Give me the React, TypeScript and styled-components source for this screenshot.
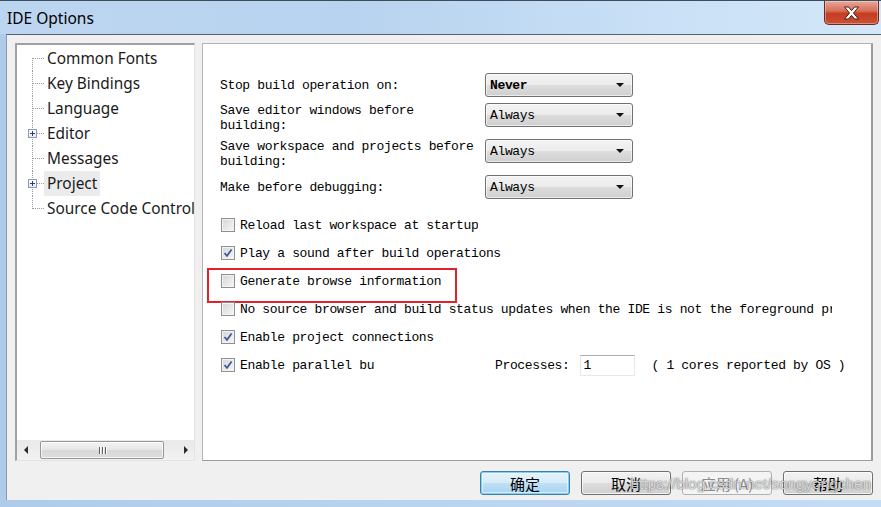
import React from "react";
import styled, { createGlobalStyle, css } from "styled-components";

const GlobalStyle = createGlobalStyle`
  html, body { margin: 0; padding: 0; }
  body { width: 881px; height: 507px; overflow: hidden; background: #b9d3ee; }
  * { box-sizing: border-box; }
`;

const mono = `"Liberation Mono", "Courier New", monospace`;
const ui = `"Noto Sans", "Open Sans", sans-serif`;
const cjk = `"Noto Sans CJK SC", "Noto Sans", sans-serif`;

const Window = styled.div`
  width: 881px;
  height: 507px;
  display: flex;
  flex-direction: column;
  background: linear-gradient(to right, #aecbea, #b9d4f0 50%, #c4dcf4);
`;

const TitleBar = styled.div`
  height: 34px;
  flex: none;
  display: flex;
  align-items: flex-start;
  border-top: 1px solid #3f4c5a;
  background: linear-gradient(to right, #bcd6f1 0%, #b8d3ef 40%, #c9e0f6 75%, #d3e7f8 100%);
`;

const Title = styled.div`
  font-family: ${ui};
  font-size: 15.5px;
  line-height: 20px;
  color: #000;
  padding: 7px 0 0 7px;
`;

const CloseButton = styled.div`
  margin-left: auto;
  margin-right: 2px;
  width: 55px;
  height: 24px;
  border: 1px solid #6b2a20;
  border-top: none;
  border-radius: 0 0 5px 5px;
  background: linear-gradient(#e8a899 0%, #d8705c 42%, #c33d22 55%, #cc5035 100%);
  box-shadow: inset 0 0 0 1px rgba(255, 255, 255, 0.35);
  display: flex;
  align-items: center;
  justify-content: center;
`;

const Client = styled.div`
  flex: 1;
  margin: 0 0 7px 6px;
  background: #f0f0f0;
  border-left: 1px solid #8c9aab;
  border-top: 1px solid #55626f;
  padding: 8px 8px 0 8px;
  display: flex;
  flex-direction: column;
`;

const Main = styled.div`
  height: 418px;
  display: flex;
  gap: 7px;
`;

const Tree = styled.div`
  width: 180px;
  display: flex;
  flex-direction: column;
  background: #fff;
  border-style: solid;
  border-width: 2px 1px 1px 2px;
  border-color: #a0a0a0 #e3e3e3 #e3e3e3 #a0a0a0;
`;

const TreeList = styled.div`
  flex: 1;
  padding-top: 1px;
  overflow: hidden;
`;

const TreeRow = styled.div<{ $first?: boolean; $last?: boolean }>`
  position: relative;
  height: 25px;
  padding-left: 27px;
  display: flex;
  align-items: center;
  white-space: nowrap;

  &::before {
    content: "";
    position: absolute;
    left: 15px;
    top: ${(p) => (p.$first ? "12px" : "0")};
    bottom: ${(p) => (p.$last ? "12px" : "0")};
    border-left: 1px dotted #9a9a9a;
  }
  &::after {
    content: "";
    position: absolute;
    left: 16px;
    top: 12px;
    width: 11px;
    border-top: 1px dotted #9a9a9a;
  }
`;

const Expander = styled.span`
  position: absolute;
  left: 11px;
  top: 8px;
  width: 9px;
  height: 9px;
  border: 1px solid #8e9aa8;
  background: linear-gradient(#ffffff, #e6e9ee);
  z-index: 1;

  &::before {
    content: "";
    position: absolute;
    left: 1px;
    top: 3px;
    width: 5px;
    height: 1px;
    background: #1f3f8a;
  }
  &::after {
    content: "";
    position: absolute;
    left: 3px;
    top: 1px;
    width: 1px;
    height: 5px;
    background: #1f3f8a;
  }
`;

const TreeLabel = styled.span<{ $selected?: boolean }>`
  font-family: ${ui};
  font-size: 15.4px;
  color: #1a1a1a;
  height: 25px;
  line-height: 25px;
  padding: 0 3px;
  background: ${(p) => (p.$selected ? "#ebebeb" : "transparent")};
`;

const HScroll = styled.div`
  height: 20px;
  flex: none;
  display: flex;
  align-items: center;
  background: linear-gradient(#e9e9e9, #f2f2f2);
`;

const ScrollArrow = styled.div<{ $dir: "left" | "right" }>`
  width: 17px;
  height: 20px;
  display: flex;
  align-items: center;
  justify-content: center;
  &::before {
    content: "";
    width: 0;
    height: 0;
    border-top: 4px solid transparent;
    border-bottom: 4px solid transparent;
    ${(p) =>
      p.$dir === "left"
        ? css`border-right: 4px solid #2b2b2b;`
        : css`border-left: 4px solid #2b2b2b;`}
  }
`;

const ScrollTrack = styled.div`
  flex: 1;
  padding-left: 6px;
  display: flex;
  align-items: center;
`;

const ScrollThumb = styled.div`
  width: 124px;
  height: 18px;
  border: 1px solid #979797;
  border-radius: 2px;
  background: linear-gradient(#f4f4f4, #e6e6e6 50%, #d8d8d8 51%, #dcdcdc);
  box-shadow: inset 0 0 0 1px rgba(255, 255, 255, 0.7);
  display: flex;
  align-items: center;
  justify-content: center;
  gap: 2px;
`;

const Grip = styled.span`
  width: 1px;
  height: 7px;
  background: #5e5e5e;
  box-shadow: 1px 0 0 #fff;
`;

const Panel = styled.div`
  flex: 1;
  background: #fff;
  border-style: solid;
  border-width: 1px 2px 1px 1px;
  border-color: #b4b4b4 #9c9ca2 #9c9ca2 #b4b4b4;
  padding: 29px 0 0 17px;
  font-family: ${mono};
  font-size: 13px;
  letter-spacing: -0.35px;
  color: #000;
`;

const Settings = styled.div`
  display: flex;
  flex-direction: column;
  gap: 6px;
`;

const SettingRow = styled.div<{ $tall?: boolean }>`
  display: flex;
  align-items: ${(p) => (p.$tall ? "flex-start" : "center")};
`;

const SettingLabel = styled.div`
  width: 265px;
  line-height: 15px;
  white-space: pre-line;
`;

const Combo = styled.div<{ $bold?: boolean }>`
  width: 148px;
  height: 24px;
  border: 1px solid #707070;
  border-radius: 3px;
  background: linear-gradient(#f3f3f3, #ebebeb 50%, #dddddd 51%, #cfcfcf);
  box-shadow: inset 0 0 0 1px rgba(255, 255, 255, 0.6);
  display: flex;
  align-items: center;
  padding: 0 8px 0 4px;
  font-weight: ${(p) => (p.$bold ? 700 : 400)};

  &::after {
    content: "";
    margin-left: auto;
    border-left: 4px solid transparent;
    border-right: 4px solid transparent;
    border-top: 4px solid #111;
  }
`;

const Checks = styled.div`
  margin-top: 12px;
  display: flex;
  flex-direction: column;
`;

const CheckRow = styled.div<{ $marked?: boolean }>`
  position: relative;
  height: 28px;
  display: flex;
  align-items: center;
  white-space: nowrap;
  ${(p) =>
    p.$marked &&
    css`
      &::after {
        content: "";
        position: absolute;
        left: -13px;
        top: 1px;
        width: 246px;
        height: 31px;
        border: 2px solid #e3212b;
      }
    `}
`;

const Box = styled.span`
  width: 14px;
  height: 14px;
  flex: none;
  margin: 0 5px 0 1px;
  border: 1px solid #8e8f8f;
  background: linear-gradient(135deg, #d2d5da, #f7f7f7);
  box-shadow: inset 0 0 0 1px #f4f4f4;
  display: flex;
  align-items: center;
  justify-content: center;
`;

const CheckText = styled.span<{ $width?: number }>`
  display: inline-block;
  overflow: hidden;
  ${(p) => (p.$width ? css`width: ${p.$width}px;` : "")}
`;

const ProcInput = styled.div`
  width: 55px;
  height: 21px;
  margin-left: 10px;
  border: 1px solid #e3e9ef;
  border-top-color: #abadb3;
  background: #fff;
  padding: 0 3px;
  line-height: 19px;
`;

const CoresText = styled.span`
  margin-left: 17px;
`;

const ButtonRow = styled.div`
  position: relative;
  margin-top: 10px;
  display: flex;
  justify-content: flex-end;
  gap: 11px;
`;

const Button = styled.div<{ $variant?: "default" | "disabled" }>`
  width: 90px;
  height: 24px;
  border-radius: 3px;
  display: flex;
  align-items: center;
  justify-content: center;
  font-family: ${cjk};
  font-size: 15px;
  color: #000;
  border: 1px solid #707070;
  background: linear-gradient(#f2f2f2, #ebebeb 50%, #dddddd 51%, #cfcfcf);
  box-shadow: inset 0 0 0 1px rgba(255, 255, 255, 0.7);
  ${(p) =>
    p.$variant === "default" &&
    css`
      border-color: #3c7fb1;
      background: linear-gradient(#e5f3fb, #d5ebf9 50%, #bfdff5 51%, #a9d3f1);
      box-shadow: inset 0 0 0 1px #7fd0f4, inset 0 0 0 2px rgba(255, 255, 255, 0.5);
    `}
  ${(p) =>
    p.$variant === "disabled" &&
    css`
      border-color: #adb2b5;
      background: #f4f4f4;
      color: #8d8d8d;
      box-shadow: none;
    `}
`;

const Watermark = styled.div`
  position: absolute;
  right: 2px;
  top: 4px;
  font-family: "Liberation Sans", Arial, sans-serif;
  font-size: 15.5px;
  color: rgba(255, 255, 255, 0.75);
  text-shadow: 0 0 1px rgba(60, 60, 60, 0.8), 0 0 2px rgba(60, 60, 60, 0.4);
  pointer-events: none;
  letter-spacing: -0.1px;
`;

const CheckMark = () => (
  <svg width="10" height="10" viewBox="0 0 10 10">
    <path d="M1.5 5 L4 7.8 L8.6 1.6" fill="none" stroke="#3d5596" strokeWidth="1.7" />
  </svg>
);

const CloseGlyph = () => (
  <svg width="17" height="14" viewBox="0 0 17 14">
    <path
      d="M1.5 1 H5.5 L8.5 4.6 L11.5 1 H15.5 L10.5 7 L15.5 13 H11.5 L8.5 9.4 L5.5 13 H1.5 L6.5 7 Z"
      fill="#fff"
      stroke="#4a1a12"
      strokeWidth="1"
      strokeLinejoin="round"
    />
  </svg>
);

type Node = { label: string; expandable?: boolean; selected?: boolean };
const nodes: Node[] = [
  { label: "Common Fonts" },
  { label: "Key Bindings" },
  { label: "Language" },
  { label: "Editor", expandable: true },
  { label: "Messages" },
  { label: "Project", expandable: true, selected: true },
  { label: "Source Code Control" },
];

const checks = [
  { text: "Reload last workspace at startup", checked: false },
  { text: "Play a sound after build operations", checked: true },
  { text: "Generate browse information", checked: false, marked: true },
  {
    text: "No source browser and build status updates when the IDE is not the foreground process",
    checked: false,
    width: 592,
  },
  { text: "Enable project connections", checked: true },
];

export default function App() {
  return (
    <>
      <GlobalStyle />
      <Window>
        <TitleBar>
          <Title>IDE Options</Title>
          <CloseButton>
            <CloseGlyph />
          </CloseButton>
        </TitleBar>
        <Client>
          <Main>
            <Tree>
              <TreeList>
                {nodes.map((n, i) => (
                  <TreeRow key={n.label} $first={i === 0} $last={i === nodes.length - 1}>
                    {n.expandable && <Expander />}
                    <TreeLabel $selected={n.selected}>{n.label}</TreeLabel>
                  </TreeRow>
                ))}
              </TreeList>
              <HScroll>
                <ScrollArrow $dir="left" />
                <ScrollTrack>
                  <ScrollThumb>
                    <Grip />
                    <Grip />
                    <Grip />
                  </ScrollThumb>
                </ScrollTrack>
                <ScrollArrow $dir="right" />
              </HScroll>
            </Tree>
            <Panel>
              <Settings>
                <SettingRow>
                  <SettingLabel>Stop build operation on:</SettingLabel>
                  <Combo $bold>Never</Combo>
                </SettingRow>
                <SettingRow $tall>
                  <SettingLabel>{"Save editor windows before\nbuilding:"}</SettingLabel>
                  <Combo>Always</Combo>
                </SettingRow>
                <SettingRow $tall>
                  <SettingLabel>{"Save workspace and projects before\nbuilding:"}</SettingLabel>
                  <Combo>Always</Combo>
                </SettingRow>
                <SettingRow>
                  <SettingLabel>Make before debugging:</SettingLabel>
                  <Combo>Always</Combo>
                </SettingRow>
              </Settings>
              <Checks>
                {checks.map((c) => (
                  <CheckRow key={c.text} $marked={c.marked}>
                    <Box>{c.checked && <CheckMark />}</Box>
                    <CheckText $width={c.width}>{c.text}</CheckText>
                  </CheckRow>
                ))}
                <CheckRow>
                  <Box>
                    <CheckMark />
                  </Box>
                  <CheckText $width={255}>Enable parallel bu</CheckText>
                  <span>Processes:</span>
                  <ProcInput>1</ProcInput>
                  <CoresText>( 1 cores reported by OS )</CoresText>
                </CheckRow>
              </Checks>
            </Panel>
          </Main>
          <ButtonRow>
            <Button $variant="default">确定</Button>
            <Button>取消</Button>
            <Button $variant="disabled">应用 (A)</Button>
            <Button>帮助</Button>
            <Watermark>https://blog.csdn.net/songyongchen</Watermark>
          </ButtonRow>
        </Client>
      </Window>
    </>
  );
}
